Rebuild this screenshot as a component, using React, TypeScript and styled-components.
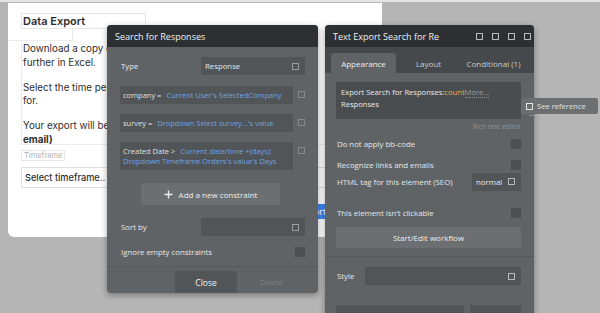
import styled, { createGlobalStyle } from 'styled-components';

const GlobalStyle = createGlobalStyle`
  html, body {
    margin: 0;
    padding: 0;
    width: 600px;
    height: 313px;
    overflow: hidden;
    background: #b5b5b5;
  }
  * { box-sizing: border-box; }
`;

const Desktop = styled.div`
  position: relative;
  width: 600px;
  height: 313px;
  border-top: 2px solid #e4e4e4;
  padding: 1px 0 0 8px;
  font-family: 'Open Sans', sans-serif;
`;

/* ---------- page card behind the editor windows ---------- */

const Card = styled.div`
  width: 374px;
  height: 234px;
  background: #fff;
  border-radius: 0 0 6px 6px;
  padding-left: 13px;
  display: flex;
  flex-direction: column;
  align-items: flex-start;
  font-family: Inter, 'Liberation Sans', sans-serif;
  color: #2e2e2e;
`;

const Heading = styled.div`
  margin-top: 10px;
  width: 125px;
  height: 16px;
  border: 1px solid #e6e6e6;
  font-size: 11px;
  font-weight: 600;
  line-height: 14px;
  padding-left: 1px;
`;

const GhostBox = styled.div`
  margin-left: -13px;
  width: 65px;
  height: 12px;
  border: 1px solid #ececec;
  border-top: none;
  border-left: none;
`;

const TextBlock = styled.div`
  width: 345px;
  height: 104px;
  border: 1px solid #ececec;
  border-top: none;
  padding: 1px 0 0 1px;
  font-size: 9.8px;
  line-height: 13.5px;

  p {
    margin: 0 0 11.5px;
  }
  b {
    font-weight: 700;
  }
`;

const FieldTag = styled.div`
  margin-top: 5px;
  height: 11px;
  border: 1px solid #e6e6e6;
  padding: 0 2px;
  font-size: 7.5px;
  line-height: 9px;
  color: #b0b0b0;
`;

const SelectBox = styled.div`
  margin-top: 6px;
  width: 345px;
  height: 21px;
  border: 1px solid #e0e0e0;
  padding-left: 3px;
  font-size: 9.2px;
  font-weight: 500;
  line-height: 19px;
`;

const ButtonRow = styled.div`
  margin-top: 16px;
  align-self: stretch;
  display: flex;
  justify-content: flex-end;
  padding-right: 20px;
`;

const BlueButton = styled.div`
  width: 100px;
  height: 15px;
  background: #3d86f0;
  color: #fff;
  font-size: 9px;
  line-height: 15px;
  text-align: center;
  border-radius: 2px;
`;

/* ---------- editor windows ---------- */

const Window = styled.div<{ $left: number; $width: number; $height: number }>`
  position: absolute;
  top: 23px;
  left: ${(p) => p.$left}px;
  width: ${(p) => p.$width}px;
  height: ${(p) => p.$height}px;
  background: #5f6366;
  border-radius: 4px;
  box-shadow: 0 2px 6px rgba(0, 0, 0, 0.35);
  display: flex;
  flex-direction: column;
  overflow: hidden;
  color: #e4e6e8;
`;

const TitleBar = styled.div`
  height: 22px;
  flex-shrink: 0;
  background: #2d3033;
  display: flex;
  align-items: center;
  padding: 0 3px 0 8px;
  font-size: 9px;
  color: #eef0f2;
`;

const TitleText = styled.span`
  flex: 1;
`;

const TitleSquares = styled.div`
  display: flex;
  gap: 9px;
`;

const Square = styled.span<{ $size?: number; $color?: string }>`
  display: inline-block;
  width: ${(p) => p.$size ?? 7}px;
  height: ${(p) => p.$size ?? 7}px;
  border: 1px solid ${(p) => p.$color ?? '#b9bcbf'};
  flex-shrink: 0;
`;

const Body = styled.div<{ $pad: string }>`
  padding: ${(p) => p.$pad};
  display: flex;
  flex-direction: column;
`;

const Row = styled.div<{ $mt: number; $h?: number }>`
  margin-top: ${(p) => p.$mt}px;
  height: ${(p) => (p.$h ? `${p.$h}px` : 'auto')};
  display: flex;
  align-items: center;
  font-size: 7.8px;
  color: #e6e8ea;
`;

const Label = styled.span<{ $w?: number }>`
  width: ${(p) => (p.$w ? `${p.$w}px` : 'auto')};
  flex: ${(p) => (p.$w ? 'none' : 1)};
  padding-left: 1px;
`;

const Input = styled.div<{ $w?: number }>`
  width: ${(p) => (p.$w ? `${p.$w}px` : 'auto')};
  flex: ${(p) => (p.$w ? 'none' : 1)};
  height: 18px;
  background: #515558;
  display: flex;
  align-items: center;
  justify-content: space-between;
  padding: 0 6px 0 4px;
  font-size: 7.8px;
  color: #e6e8ea;
`;

const Constraint = styled.div`
  width: 184px;
  min-height: 18px;
  background: #515558;
  padding: 4px 3px;
  font-size: 7.5px;
  line-height: 10px;
  color: #dfe1e3;
  display: flex;
  flex-wrap: wrap;
  align-content: center;
  column-gap: 5px;
  white-space: nowrap;
`;

const Key = styled.span``;

const Dyn = styled.span<{ $full?: boolean }>`
  color: #6fa3e0;
  flex-basis: ${(p) => (p.$full ? '100%' : 'auto')};
`;

const Count = styled.span`
  color: #e2b24a;
`;

const More = styled.span`
  color: #9a9ea1;
  border-bottom: 1px dotted #8d9194;
`;

const ConstraintRow = styled(Row)`
  gap: 5px;
  align-items: flex-start;

  & > ${Square} {
    margin-top: 5px;
    border-color: #85898c;
  }
`;

const LightButton = styled.div<{ $w: number; $h: number; $ml?: number }>`
  width: ${(p) => p.$w}px;
  height: ${(p) => p.$h}px;
  margin-left: ${(p) => p.$ml ?? 0}px;
  background: #6b6f72;
  display: flex;
  align-items: center;
  justify-content: center;
  gap: 6px;
  font-size: 8px;
  color: #eceef0;
`;

const DarkCheck = styled.span`
  width: 10px;
  height: 10px;
  background: #4c5053;
  flex-shrink: 0;
`;

const Separator = styled.div<{ $mt: number }>`
  margin-top: ${(p) => p.$mt}px;
  height: 1px;
  background: #565a5d;
`;

const Footer = styled.div`
  display: flex;
  align-items: center;
  padding: 4px 0 0 68px;
  gap: 23px;
`;

const CloseButton = styled.div`
  width: 62px;
  height: 22px;
  background: #525659;
  display: flex;
  align-items: center;
  justify-content: center;
  font-size: 8.5px;
  color: #f0f2f4;
`;

const DeleteText = styled.span`
  font-size: 7.5px;
  color: #7a7e81;
`;

const TabBar = styled.div`
  height: 26px;
  flex-shrink: 0;
  background: #45494c;
  display: flex;
  align-items: flex-end;
  padding-left: 6px;
`;

const Tab = styled.div<{ $active?: boolean }>`
  width: 65px;
  height: 20px;
  border-radius: 3px 3px 0 0;
  background: ${(p) => (p.$active ? '#5f6366' : 'transparent')};
  color: ${(p) => (p.$active ? '#eef0f2' : '#c9ccce')};
  font-size: 8px;
  display: flex;
  align-items: center;
  justify-content: center;
  white-space: nowrap;
`;

const RichBox = styled.div`
  height: 37px;
  background: #4a4d50;
  padding: 4px 5px;
  font-size: 7.6px;
  line-height: 12px;
  color: #e8eaec;
`;

const RichNote = styled.div`
  margin-top: 3px;
  text-align: right;
  font-size: 6.8px;
  color: #8e9295;
`;

const Tooltip = styled.div`
  position: absolute;
  left: 521px;
  top: 96px;
  width: 77px;
  height: 16px;
  background: #6c6e70;
  border-radius: 2px;
  display: flex;
  align-items: center;
  gap: 4px;
  padding-left: 5px;
  font-size: 7.6px;
  color: #e2e4e6;

  &::after {
    content: '';
    position: absolute;
    left: 8px;
    bottom: -2px;
    width: 6px;
    height: 1px;
    background: #8e9092;
  }
`;

const Spacer = styled.span`
  width: 6px;
  flex-shrink: 0;
`;

const PlusIcon = () => (
  <svg width="9" height="9" viewBox="0 0 9 9">
    <path d="M4.5 0.5v8M0.5 4.5h8" stroke="#eceef0" strokeWidth="1.4" />
  </svg>
);

function SearchWindow() {
  return (
    <Window $left={107} $width={211} $height={268}>
      <TitleBar>
        <TitleText>Search for Responses</TitleText>
      </TitleBar>
      <Body $pad="0 13px 0 13px">
        <Row $mt={10} $h={18}>
          <Label $w={81}>Type</Label>
          <Input $w={104}>
            Response <Square $color="#9a9ea1" />
          </Input>
        </Row>
        <ConstraintRow $mt={11}>
          <Constraint>
            <Key>company =</Key>
            <Dyn>Current User's SelectedCompany</Dyn>
          </Constraint>
          <Square />
        </ConstraintRow>
        <ConstraintRow $mt={10}>
          <Constraint>
            <Key>survey =</Key>
            <Dyn>Dropdown Select survey...'s value</Dyn>
          </Constraint>
          <Square />
        </ConstraintRow>
        <ConstraintRow $mt={10}>
          <Constraint>
            <Key>Created Date &gt;</Key>
            <Dyn>Current date/time +(days):</Dyn>
            <Dyn $full>Dropdown Timeframe Orders's value's Days</Dyn>
          </Constraint>
          <Square />
        </ConstraintRow>
        <Row $mt={13}>
          <LightButton $w={139} $h={22} $ml={21}>
            <PlusIcon />
            Add a new constraint
          </LightButton>
        </Row>
        <Row $mt={13} $h={18}>
          <Label $w={81}>Sort by</Label>
          <Input $w={104}>
            <span />
            <Square $color="#9a9ea1" />
          </Input>
        </Row>
        <Row $mt={11} $h={10}>
          <Label>Ignore empty constraints</Label>
          <DarkCheck />
        </Row>
      </Body>
      <Separator $mt={9} />
      <Footer>
        <CloseButton>Close</CloseButton>
        <DeleteText>Delete</DeleteText>
      </Footer>
    </Window>
  );
}

function TextWindow() {
  return (
    <Window $left={325} $width={209} $height={300}>
      <TitleBar>
        <TitleText>Text Export Search for Re</TitleText>
        <TitleSquares>
          <Square />
          <Square />
          <Square />
          <Square />
        </TitleSquares>
      </TitleBar>
      <TabBar>
        <Tab $active>Appearance</Tab>
        <Tab>Layout</Tab>
        <Tab>Conditional (1)</Tab>
      </TabBar>
      <Body $pad="9px 13px 0 11px">
        <RichBox>
          Export Search for Responses:<Count>count</Count>
          <More>More...</More>
          <br />
          Responses
        </RichBox>
        <RichNote>Rich text editor</RichNote>
        <Row $mt={8} $h={10}>
          <Label>Do not apply bb-code</Label>
          <DarkCheck />
        </Row>
        <Row $mt={11} $h={10}>
          <Label>Recognize links and emails</Label>
          <DarkCheck />
        </Row>
        <Row $mt={2} $h={19}>
          <Label>HTML tag for this element (SEO)</Label>
          <Input $w={49}>
            normal <Square $color="#b9bcbf" />
          </Input>
        </Row>
        <Row $mt={17} $h={10}>
          <Label>This element isn't clickable</Label>
          <DarkCheck />
        </Row>
        <Row $mt={9}>
          <LightButton $w={185} $h={21}>
            Start/Edit workflow
          </LightButton>
        </Row>
      </Body>
      <Separator $mt={8} />
      <Body $pad="0 13px 0 11px">
        <Row $mt={10} $h={18}>
          <Label $w={29}>Style</Label>
          <Input>
            <span />
            <Square $color="#b9bcbf" />
          </Input>
        </Row>
        <Row $mt={20} $h={18}>
          <Input $w={128} />
          <Spacer />
          <Input />
        </Row>
      </Body>
    </Window>
  );
}

export default function App() {
  return (
    <>
      <GlobalStyle />
      <Desktop>
        <Card>
          <Heading>Data Export</Heading>
          <GhostBox />
          <TextBlock>
            <p>
              Download a copy of your survey responses to analyse
              <br />
              further in Excel.
            </p>
            <p>
              Select the time period you would like to export data
              <br />
              for.
            </p>
            <p>
              Your export will be sent to your inbox (please check your
              <br />
              <b>email)</b>
            </p>
          </TextBlock>
          <FieldTag>Timeframe</FieldTag>
          <SelectBox>Select timeframe..</SelectBox>
          <ButtonRow>
            <BlueButton>Export</BlueButton>
          </ButtonRow>
        </Card>
        <SearchWindow />
        <TextWindow />
        <Tooltip>
          <Square $color="#e2e4e6" />
          See reference
        </Tooltip>
      </Desktop>
    </>
  );
}
